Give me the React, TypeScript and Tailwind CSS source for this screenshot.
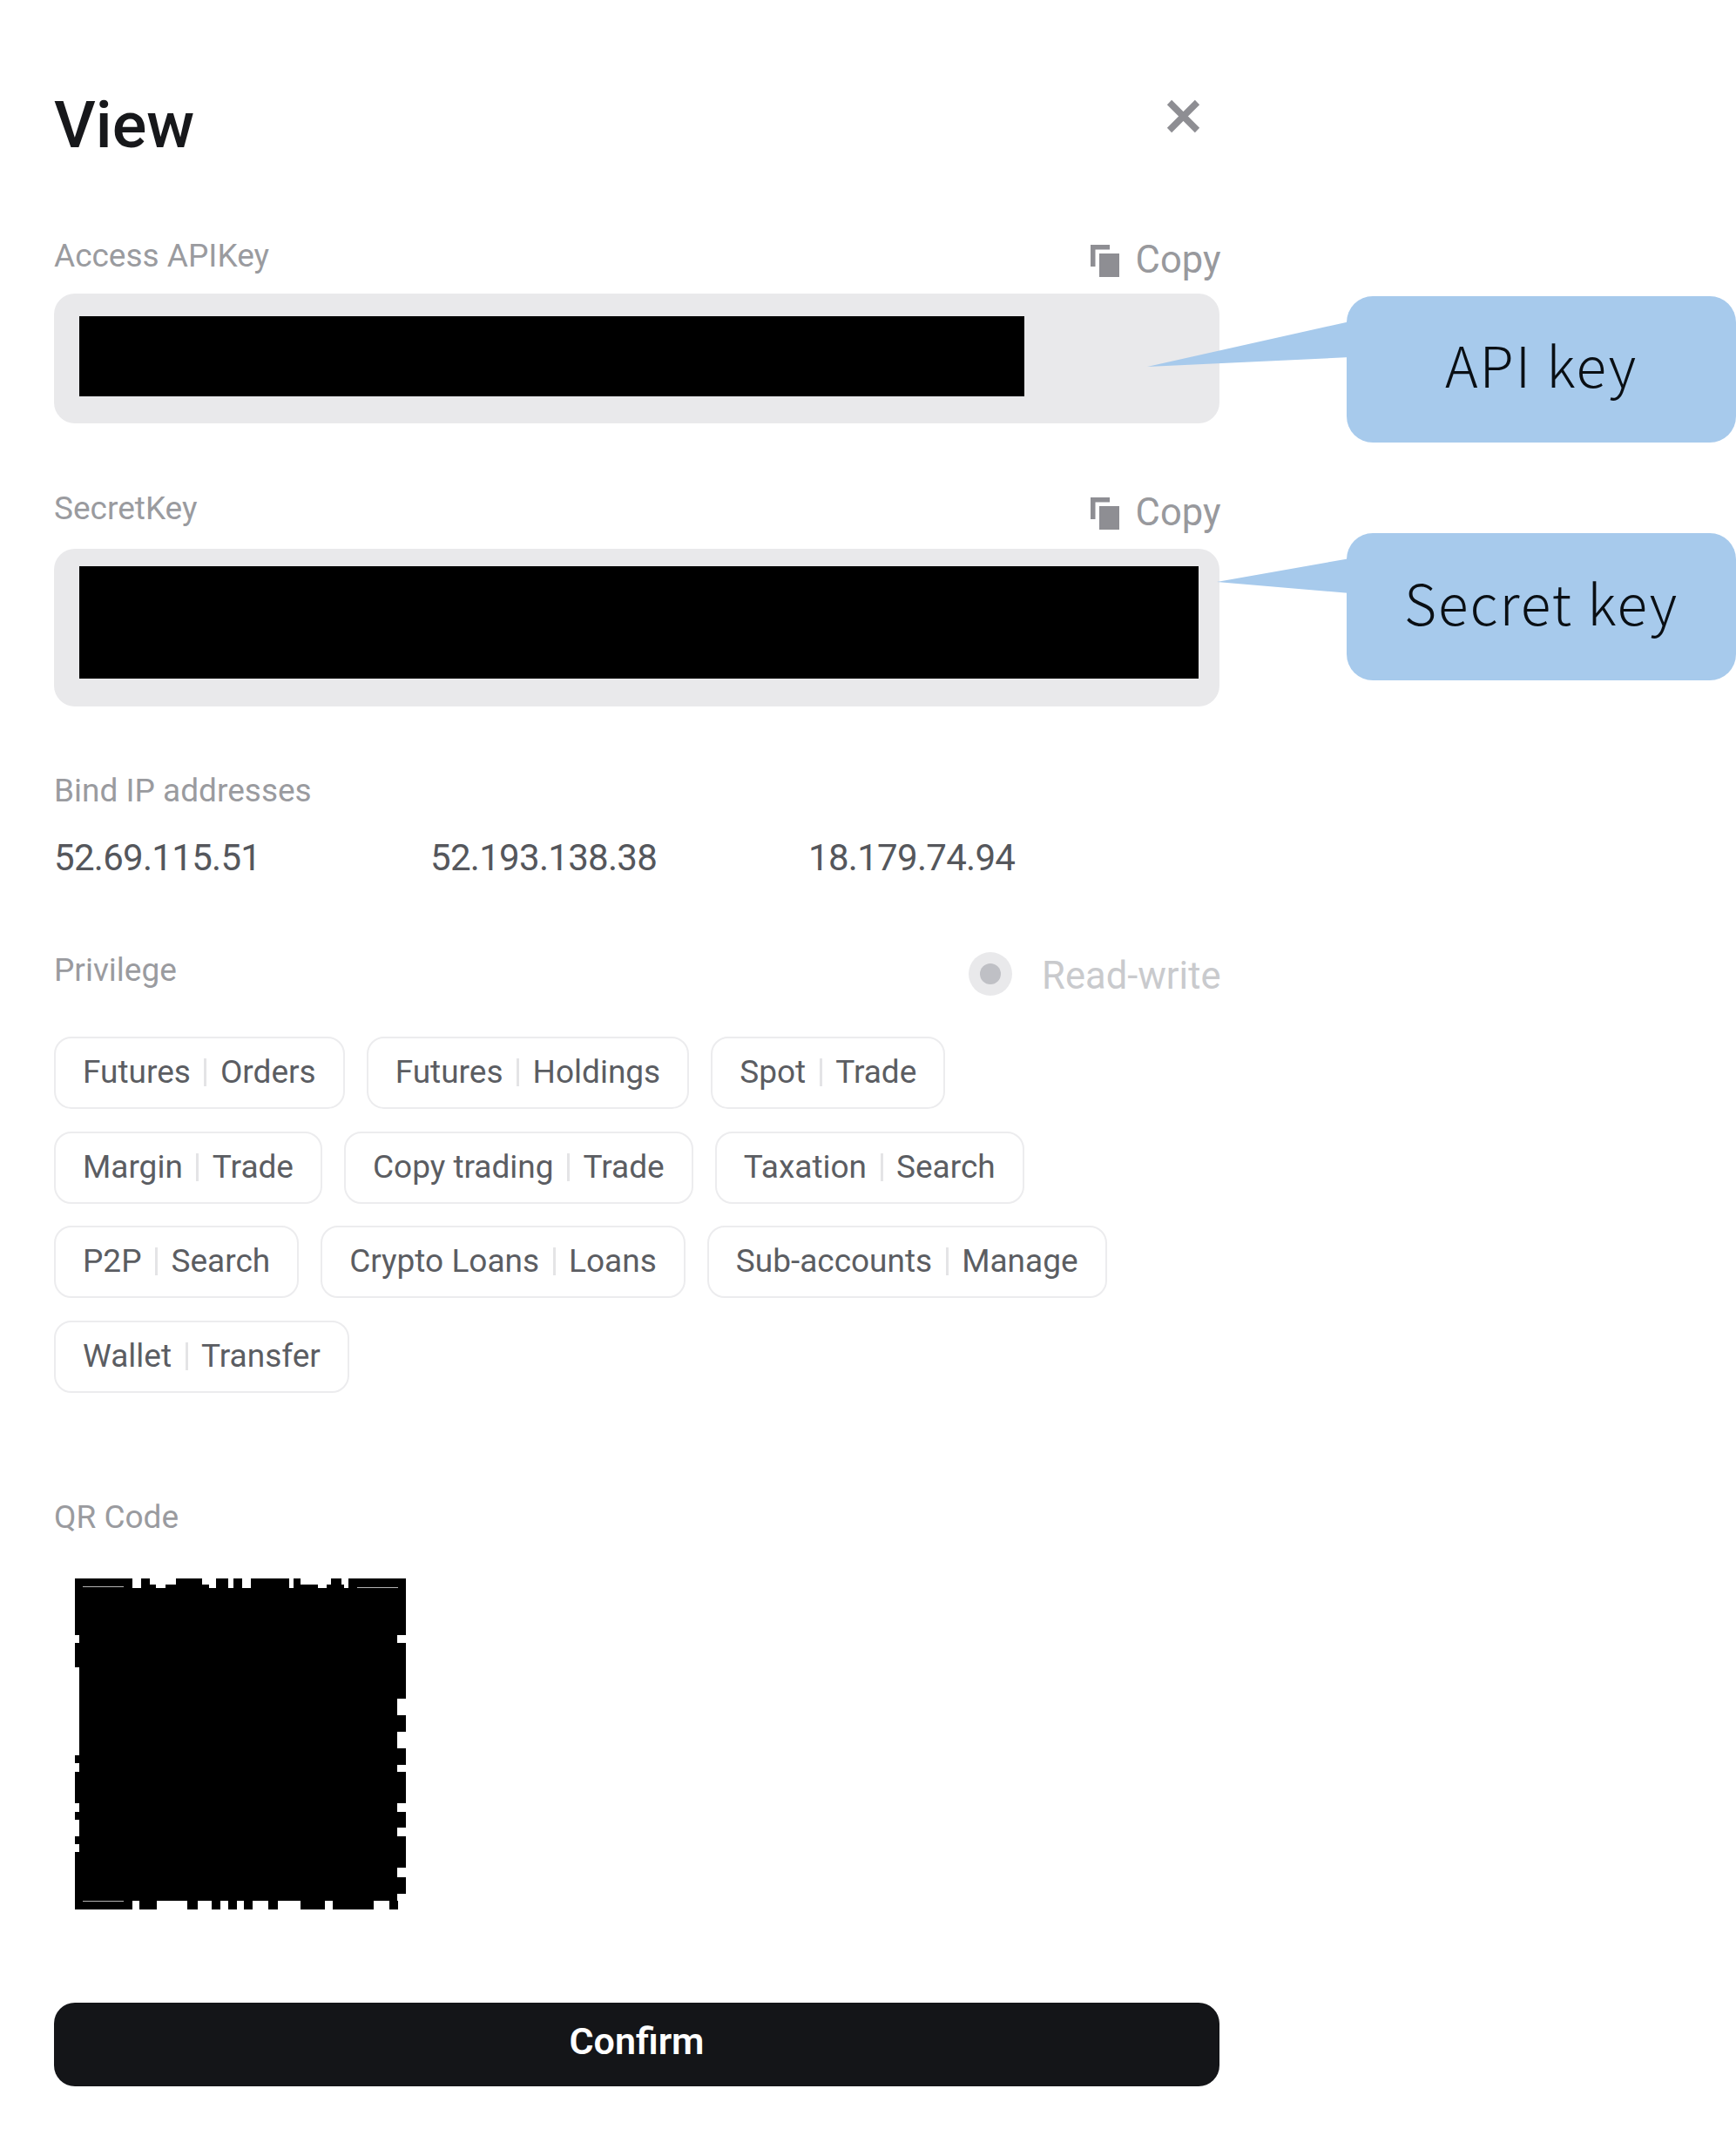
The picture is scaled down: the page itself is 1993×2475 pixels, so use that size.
const chips = [
  ["Futures", "Orders"],
  ["Futures", "Holdings"],
  ["Spot", "Trade"],
  ["Margin", "Trade"],
  ["Copy trading", "Trade"],
  ["Taxation", "Search"],
  ["P2P", "Search"],
  ["Crypto Loans", "Loans"],
  ["Sub-accounts", "Manage"],
  ["Wallet", "Transfer"],
];

// visible edge modules of the blacked out qr code: [x, y, w, h], svg starts at page 86,1811
const qrModules = [
  // top
  [0, 1, 66, 12], [76, 1, 10, 12], [84, 8, 9, 5], [104, 8, 50, 5], [116, 1, 30, 12], [162, 1, 14, 12], [182, 1, 10, 12],
  [202, 1, 44, 12], [251, 1, 8, 12], [259, 8, 20, 5], [289, 8, 20, 5], [294, 1, 12, 12], [314, 1, 66, 12],
  // bottom
  [0, 371, 66, 10], [74, 371, 20, 10], [129, 371, 12, 10], [157, 371, 10, 10], [176, 371, 10, 10], [194, 371, 10, 10],
  [222, 371, 11, 10], [259, 371, 28, 10], [296, 371, 47, 10], [361, 371, 10, 10],
  // left
  [0, 1, 5, 65], [0, 75, 5, 28], [0, 204, 5, 9], [0, 223, 5, 36], [0, 269, 5, 9], [0, 297, 5, 9], [0, 315, 5, 65],
  // right
  [370, 1, 10, 65], [370, 75, 10, 64], [370, 158, 10, 19], [370, 196, 10, 19], [370, 223, 10, 36], [370, 269, 10, 18],
  [370, 297, 10, 36], [370, 344, 10, 19],
];

function QrCode() {
  return (
    <svg width="380" height="381" viewBox="0 0 380 381" className="mt-[45px] ml-[24px] block">
      <rect x="5" y="12" width="365" height="359" fill="#000" />
      {qrModules.map(([x, y, w, h], i) => (
        <rect key={i} x={x} y={y} width={w} height={h} fill="#000" />
      ))}
      <rect x="9" y="10" width="47" height="1" fill="#fff" opacity="0.7" />
      <rect x="324" y="11" width="47" height="1" fill="#fff" opacity="0.7" />
      <rect x="9" y="371" width="47" height="1" fill="#fff" opacity="0.7" />
    </svg>
  );
}

function CopyButton() {
  return (
    <div className="flex items-start">
      <svg width="33" height="37" viewBox="0 0 33 37" className="mt-[11px] mr-[19px]">
        <path d="M0 0H22V5.5H5.5V25H0Z" fill="#8e8e93" />
        <rect x="10" y="10" width="23" height="27" fill="#8e8e93" />
      </svg>
      <span className="-mr-[1.5px] text-[43.5px] leading-[57px] text-[#98999d]">Copy</span>
    </div>
  );
}

function Callout({ label, position }: { label: string; position: string }) {
  return (
    <div
      className={`absolute left-[1546px] flex w-[447px] items-center justify-center rounded-[30px] bg-[#a7caec] pb-[14px] font-['Noto_Sans_CJK_JP',sans-serif] text-[64px] font-light tracking-[2px] text-[#0a0f14] ${position}`}
    >
      {label}
    </div>
  );
}

export default function App() {
  return (
    <div className="relative h-[2475px] w-[1993px] overflow-hidden bg-white font-['Roboto',sans-serif]">
      <div className="ml-[62px] w-[1338px] pt-[102px]">
        {/* Header */}
        <div className="flex h-[80px] items-start justify-between pr-[22px]">
          <h1 className="text-[74px] leading-[84px] font-medium text-[#17181b]">View</h1>
          <svg width="39" height="39" viewBox="0 0 39 39" className="mt-[12px]">
            <path d="M3.5 3.5L35.5 35.5M35.5 3.5L3.5 35.5" stroke="#8e8e93" strokeWidth="7.5" />
          </svg>
        </div>

        {/* Access key */}
        <div className="mt-[88px] flex h-[54px] items-start justify-between">
          <span className="text-[37px] leading-[48px] text-[#9a9b9f]">Access APIKey</span>
          <CopyButton />
        </div>
        <div className="mt-[13px] h-[149px] rounded-[24px] bg-[#e9e9eb] pt-[26px] pl-[29px]">
          <div className="h-[92px] w-[1085px] bg-black" />
        </div>

        {/* Secret key */}
        <div className="mt-[74px] flex h-[54px] items-start justify-between">
          <span className="text-[37px] leading-[48px] text-[#9a9b9f]">SecretKey</span>
          <CopyButton />
        </div>
        <div className="mt-[16px] h-[181px] rounded-[24px] bg-[#e9e9eb] pt-[20px] pl-[29px]">
          <div className="h-[129px] w-[1285px] bg-black" />
        </div>

        {/* Bind IPs */}
        <div className="mt-[72px] text-[37px] leading-[49px] text-[#9a9b9f]">Bind IP addresses</div>
        <div className="mt-[28px] flex text-[42px] leading-[50px] tracking-[-0.7px] text-[#55575c]">
          <span className="w-[432px]">52.69.115.51</span>
          <span className="w-[434px]">52.193.138.38</span>
          <span>18.179.74.94</span>
        </div>

        {/* Privilege */}
        <div className="mt-[80px] flex h-[54px] items-start justify-between">
          <span className="text-[37px] leading-[47px] text-[#9a9b9f]">Privilege</span>
          <div className="-mr-[1.5px] flex items-start gap-[34px]">
            <div className="mt-[3px] flex h-[50px] w-[50px] items-center justify-center rounded-full bg-[#e9e9eb]">
              <div className="h-[24px] w-[24px] rounded-full bg-[#bfc0c5]" />
            </div>
            <span className="text-[43.5px] leading-[61px] text-[#c9cacd]">Read-write</span>
          </div>
        </div>

        <div className="mt-[46px] flex flex-wrap gap-x-[25px] gap-y-[25.5px]">
          {chips.map(([group, action]) => (
            <div
              key={`${group}-${action}`}
              className="flex h-[83px] items-center gap-[15.5px] rounded-[20px] border-2 border-[#ececee] px-[31px] pb-[1px] text-[37px] text-[#5b5d62]"
            >
              <span>{group}</span>
              <span className="h-[32px] w-[3px] bg-[#e4e4e6]" />
              <span>{action}</span>
            </div>
          ))}
        </div>

        {/* QR code */}
        <div className="mt-[119px] text-[37px] leading-[48px] text-[#9a9b9f]">QR Code</div>
        <QrCode />

        <button
          type="button"
          className="mt-[107px] block h-[96px] w-full rounded-[24px] bg-[#141518] pb-[6px] text-[43px] font-semibold text-white"
        >
          Confirm
        </button>
      </div>

      {/* Annotations laid over the screenshot */}
      <svg width="1993" height="820" viewBox="0 0 1993 820" className="pointer-events-none absolute top-0 left-0">
        <path d="M1550 369L1317 421L1550 410Z" fill="#a7caec" />
        <path d="M1550 641L1397 668L1550 681Z" fill="#a7caec" />
      </svg>
      <Callout label="API key" position="top-[340px] h-[168px]" />
      <Callout label="Secret key" position="top-[612px] h-[169px]" />
    </div>
  );
}
